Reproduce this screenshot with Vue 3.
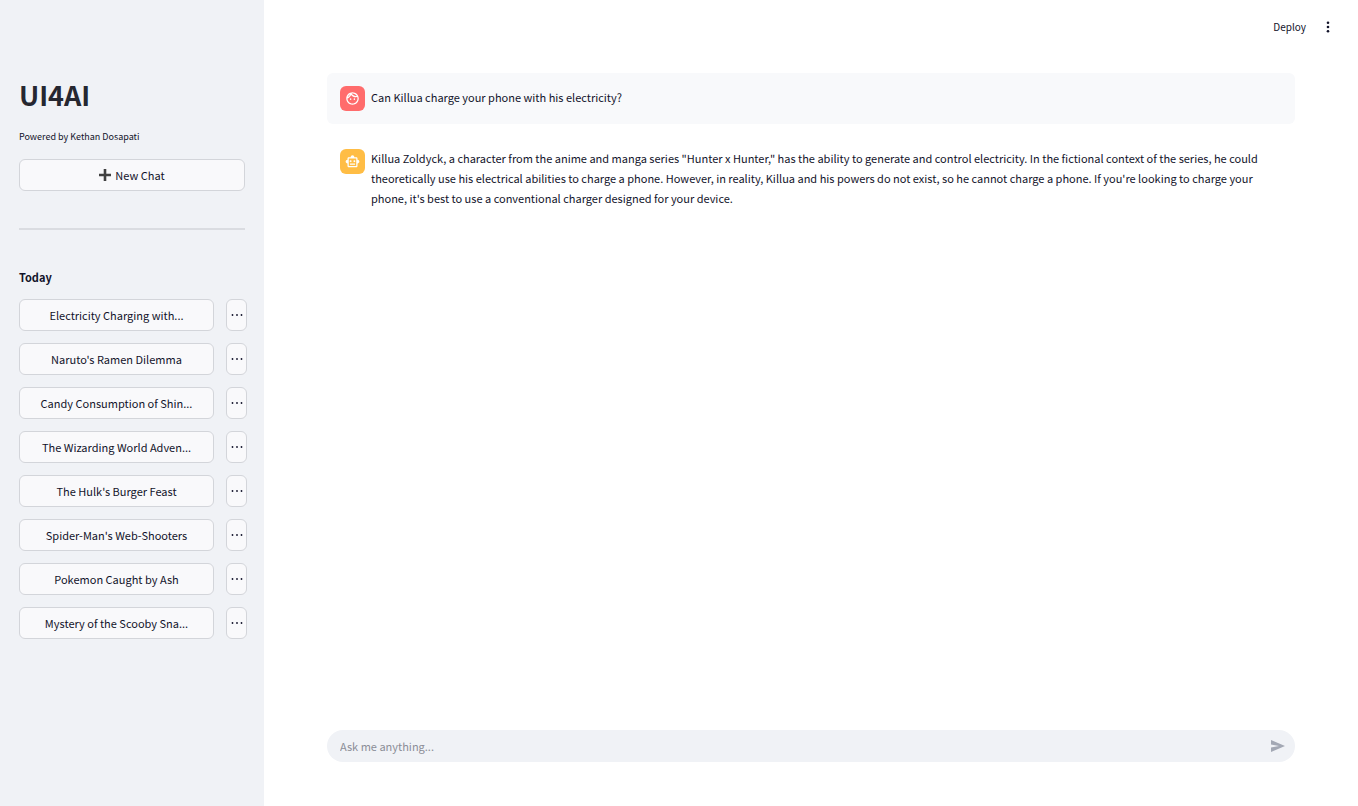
<script setup>
import { ref } from 'vue'

const question = ref('')

const conversations = [
  { id: 1, title: 'Electricity Charging with...' },
  { id: 2, title: "Naruto's Ramen Dilemma" },
  { id: 3, title: 'Candy Consumption of Shin...' },
  { id: 4, title: 'The Wizarding World Adven...' },
  { id: 5, title: "The Hulk's Burger Feast" },
  { id: 6, title: "Spider-Man's Web-Shooters" },
  { id: 7, title: 'Pokemon Caught by Ash' },
  { id: 8, title: 'Mystery of the Scooby Sna...' }
]

const messages = [
  { id: 1, role: 'user', text: 'Can Killua charge your phone with his electricity?' },
  {
    id: 2,
    role: 'assistant',
    text: 'Killua Zoldyck, a character from the anime and manga series "Hunter x Hunter," has the ability to generate and control electricity. In the fictional context of the series, he could theoretically use his electrical abilities to charge a phone. However, in reality, Killua and his powers do not exist, so he cannot charge a phone. If you\'re looking to charge your phone, it\'s best to use a conventional charger designed for your device.'
  }
]
</script>

<template>
  <div class="app">
    <aside class="sidebar">
      <h1 class="title">UI4AI</h1>
      <p class="powered">Powered by Kethan Dosapati</p>
      <button class="btn btn-new">
        <svg class="plus" viewBox="0 0 12 12"><path d="M4.7 0h2.6v4.7H12v2.6H7.3V12H4.7V7.3H0V4.7h4.7z" /></svg>
        New Chat
      </button>

      <hr class="divider" />

      <h2 class="group">Today</h2>
      <ul class="list">
        <li v-for="conv in conversations" :key="conv.id" class="row">
          <button class="btn btn-conv">{{ conv.title }}</button>
          <button class="btn btn-more" :aria-label="'Options for ' + conv.title">
            <svg viewBox="0 0 12 12"><circle cx="1.5" cy="6" r="0.9" /><circle cx="6" cy="6" r="0.9" /><circle cx="10.5" cy="6" r="0.9" /></svg>
          </button>
        </li>
      </ul>
    </aside>

    <main class="main">
      <header class="toolbar">
        <button class="deploy">Deploy</button>
        <button class="menu" aria-label="Menu">
          <svg viewBox="0 0 4 12"><circle cx="2" cy="1.8" r="1.3" /><circle cx="2" cy="6" r="1.3" /><circle cx="2" cy="10.2" r="1.3" /></svg>
        </button>
      </header>

      <section class="chat">
        <div v-for="msg in messages" :key="msg.id" class="message" :class="msg.role">
          <div class="avatar">
            <svg v-if="msg.role === 'user'" viewBox="0 0 24 24">
              <path d="M10.25 13c0 .69-.56 1.25-1.25 1.25S7.75 13.69 7.75 13s.56-1.25 1.25-1.25 1.25.56 1.25 1.25zM15 11.75c-.69 0-1.25.56-1.25 1.25s.56 1.25 1.25 1.25 1.25-.56 1.25-1.25-.56-1.25-1.25-1.25zm7 .25c0 5.52-4.48 10-10 10S2 17.52 2 12 6.48 2 12 2s10 4.48 10 10zM10.66 4.12C12.06 6.44 14.6 8 17.5 8c.46 0 .91-.05 1.34-.12C17.44 5.56 14.9 4 12 4c-.46 0-.91.05-1.34.12zM4.42 9.47c1.71-.97 3.03-2.55 3.66-4.44C6.37 6 5.05 7.58 4.42 9.47zM20 12c0-.78-.12-1.53-.33-2.24-.7.15-1.42.24-2.17.24-3.13 0-5.92-1.44-7.76-3.69C8.69 8.87 6.6 10.88 4 11.86c.01.04 0 .09 0 .14 0 4.41 3.59 8 8 8s8-3.59 8-8z" />
            </svg>
            <svg v-else viewBox="0 0 24 24">
              <path d="M20 9V7c0-1.1-.9-2-2-2h-3c0-1.66-1.34-3-3-3S9 3.34 9 5H6c-1.1 0-2 .9-2 2v2c-1.66 0-3 1.34-3 3s1.34 3 3 3v4c0 1.1.9 2 2 2h12c1.1 0 2-.9 2-2v-4c1.66 0 3-1.34 3-3s-1.34-3-3-3zm-2 10H6V7h12v12zm-9-6c-.83 0-1.5-.67-1.5-1.5S8.17 10 9 10s1.5.67 1.5 1.5S9.83 13 9 13zm7.5-1.5c0 .83-.67 1.5-1.5 1.5s-1.5-.67-1.5-1.5.67-1.5 1.5-1.5 1.5.67 1.5 1.5zM8 15h8v2H8v-2z" />
            </svg>
          </div>
          <p class="text">{{ msg.text }}</p>
        </div>
      </section>

      <form class="prompt" @submit.prevent>
        <input v-model="question" class="prompt-input" type="text" placeholder="Ask me anything..." aria-label="Ask me anything" />
        <button class="send" aria-label="Send">
          <svg viewBox="0 0 14 12"><path d="M0 0l14 6-14 6V7.4L8 6 0 4.6z" /></svg>
        </button>
      </form>
    </main>
  </div>
</template>

<style>
body {
  margin: 0;
  background: #fff;
}
</style>

<style scoped>
.app {
  display: flex;
  min-height: 100vh;
  color: #12132a;
  font-family: "Source Sans Pro", "Noto Sans CJK JP", sans-serif;
  font-size: 11px;
  line-height: 20px;
}
button,
input {
  font: inherit;
  color: inherit;
}
button {
  padding: 0;
  border: none;
  background: none;
  cursor: pointer;
}
svg {
  display: block;
  fill: currentColor;
}

/* ── Sidebar ── */

.sidebar {
  box-sizing: border-box;
  flex: 0 0 264px;
  padding: 75px 19px 40px;
  background: #f0f2f6;
}
.title {
  margin: 0;
  font-size: 27px;
  font-weight: 700;
  line-height: 40px;
  color: #262730;
}
.powered {
  margin: 12px 0;
  font-size: 9px;
}
.btn {
  display: flex;
  align-items: center;
  justify-content: center;
  box-sizing: border-box;
  height: 32px;
  padding-bottom: 1px;
  border: 1px solid #d3d5da;
  border-radius: 6px;
  background: #f9f9fb;
  white-space: nowrap;
}
.btn:hover { border-color: #ff4b4b; }
.btn-new {
  gap: 4px;
  width: 100%;
}
.plus {
  width: 12px;
  height: 12px;
  fill: #404040;
}
.divider {
  height: 2px;
  margin: 37px 0;
  border: none;
  background: #dadce1;
}
.group {
  margin: 0 0 12px;
  font-size: 11px;
  font-weight: 700;
}
.list {
  display: flex;
  flex-direction: column;
  gap: 12px;
  margin: 0 -2px 0 0;
  padding: 0;
  list-style: none;
}
.row {
  display: flex;
  gap: 12px;
}
.btn-conv {
  flex: 1;
  min-width: 0;
}
.btn-more { width: 21px; }
.btn-more svg {
  width: 12px;
  height: 12px;
}

/* ── Main ── */

.main {
  flex: 1;
  min-width: 0;
  display: flex;
  flex-direction: column;
  padding: 0 63px 44px;
}
.toolbar {
  display: flex;
  align-items: center;
  justify-content: flex-end;
  gap: 20px;
  height: 54px;
  margin-right: -35px;
}
.deploy { font-size: 10px; }
.menu svg {
  width: 4px;
  height: 12px;
}
.chat {
  display: flex;
  flex-direction: column;
  flex: 1;
  gap: 12px;
  padding: 19px 0;
}
.message {
  display: flex;
  align-items: flex-start;
  gap: 6px;
  padding: 13px;
  border-radius: 6px;
}
.user { background: #f8f9fb; }
.avatar {
  display: flex;
  align-items: center;
  justify-content: center;
  flex: 0 0 25px;
  height: 25px;
  border-radius: 6px;
  background: #ffbd45;
  color: #fff;
}
.user .avatar { background: #ff6c6c; }
.avatar svg {
  width: 15px;
  height: 15px;
}
.text { margin: -1px 0 0; }
.user .text {
  margin: 0;
  padding: 1px 0 4px;
}

.prompt {
  display: flex;
  align-items: center;
  height: 32px;
  padding: 0 10px 0 13px;
  border-radius: 16px;
  background: #f0f2f6;
}
.prompt-input {
  flex: 1;
  min-width: 0;
  padding: 0 0 1px;
  border: none;
  outline: none;
  background: transparent;
}
.prompt-input::placeholder {
  color: #8b8d97;
  opacity: 1;
}
.send { color: #a3a8b4; }
.send svg {
  width: 14px;
  height: 12px;
}
</style>
